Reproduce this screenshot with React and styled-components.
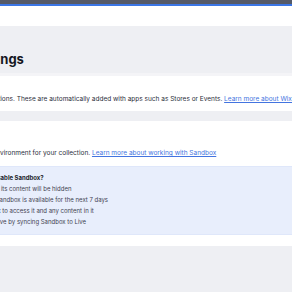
import styled, { createGlobalStyle } from 'styled-components'

const Global = createGlobalStyle`
  html, body { margin: 0; padding: 0; background: #eeeff3; }
  body { font-family: Inter, "Noto Sans", sans-serif; color: #20232f; }
`

const Frame = styled.div`
  width: 292px;
  height: 292px;
  overflow: hidden;
  background: #eeeff3;
`

const TopBar = styled.div`
  height: 4px;
  background: #555a68;
  border-bottom: 2px solid #3b76e6;
`

const Toolbar = styled.div`
  height: 20px;
  background: #fff;
`

// the window shows the page scrolled to the right, so every text starts left of the frame
const Page = styled.div`
  width: 292px;
`

const Header = styled.header`
  height: 50px;
  display: flex;
  align-items: flex-end;
  padding-bottom: 7px;
  box-sizing: border-box;
  border-bottom: 3px solid #f4f4f7;
`

const Title = styled.h1`
  margin: 0 0 0 ${p => p.$x}px;
  font-size: 13px;
  line-height: 13px;
  font-weight: 700;
  color: #15171f;
  white-space: nowrap;
`

const Card = styled.section`
  background: #fff;
  padding: ${p => p.$pad};
  margin-bottom: 10px;
`

const Desc = styled.p`
  margin: 0 0 0 ${p => p.$x}px;
  font-size: 6.5px;
  line-height: 8px;
  color: #2a2d3a;
  white-space: nowrap;
`

const Link = styled.a`
  color: #4374e0;
  text-decoration: underline;
`

const Notice = styled.div`
  margin-top: 9px;
  background: #e8eefc;
  border-top: 1px solid #dfe7fa;
  border-bottom: 1px solid #dfe7fa;
  padding: 4.5px 0 6.3px 0;
`

const NoticeTitle = styled.div`
  margin-left: ${p => p.$x}px;
  font-size: 6px;
  font-weight: 700;
  line-height: 11px;
  color: #1b1e2b;
  white-space: nowrap;
`

const NoticeList = styled.ul`
  margin: 0;
  padding: 0;
  list-style: none;
`

const NoticeItem = styled.li`
  margin-left: ${p => p.$x}px;
  font-size: 6px;
  line-height: 11.3px;
  color: #3f4250;
  white-space: nowrap;
`

export default function App() {
  return (
    <Frame>
      <Global />
      <TopBar />
      <Toolbar />
      <Page>
        <Header>
          <Title $x={-96}>Collection Settings</Title>
        </Header>
        <Card $pad="19px 0 8px 0">
          <Desc $x={-103.5}>
            View and manage Wix app collections. These are automatically added with apps such as Stores or Events.{' '}
            <Link href="#">Learn more about Wix app collections</Link>
          </Desc>
        </Card>
        <Card $pad="28px 0 11px 0">
          <Desc $x={-64}>
            Create a Sandbox environment for your collection.{' '}
            <Link href="#">Learn more about working with Sandbox</Link>
          </Desc>
          <Notice>
            <NoticeTitle $x={-82}>What happens when you disable Sandbox?</NoticeTitle>
            <NoticeList>
              <NoticeItem $x={-43}>• Sandbox and its content will be hidden</NoticeItem>
              <NoticeItem $x={-24}>• Your Sandbox is available for the next 7 days</NoticeItem>
              <NoticeItem $x={-60}>• Re-enable Sandbox to access it and any content in it</NoticeItem>
              <NoticeItem $x={-56}>• Save content to Live by syncing Sandbox to Live</NoticeItem>
            </NoticeList>
          </Notice>
        </Card>
      </Page>
    </Frame>
  )
}
